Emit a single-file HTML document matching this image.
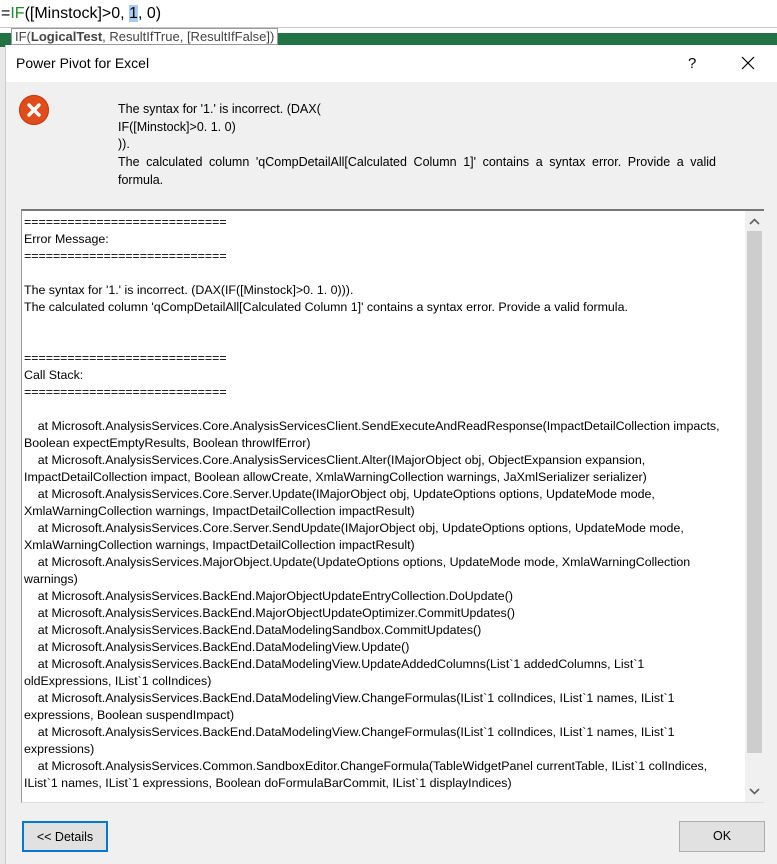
<!DOCTYPE html>
<html><head><meta charset="utf-8"><style>
*{margin:0;padding:0;box-sizing:border-box}
body{width:777px;height:864px;overflow:hidden;background:#fff;font-family:"Liberation Sans",sans-serif;position:relative}
.fbar{position:absolute;left:0;top:0;width:777px;height:28px;background:#fff;border-bottom:1px solid #c8c8c8;font-size:16px;line-height:28px;padding-left:1px}
.fbar .g{color:#1e8a2e}
.fbar .sel{background:#a6cdf0}
.hdr{position:absolute;left:0;top:33px;width:777px;height:14px;background:#217346}
.tip{position:absolute;left:11px;top:28px;height:17px;background:#fff;border:1px solid #999;font-size:13px;line-height:15px;padding:0 3px;color:#444}
.left{position:absolute;left:0;top:47px;width:5px;height:817px;background:#e8e8e8}
.dlg{position:absolute;left:5px;top:45px;width:772px;height:819px;background:#f0f0f0;border-left:1px solid #ccc}
.title{position:absolute;left:0;top:0;width:772px;height:37px;background:#fff;font-size:14px;line-height:37px;padding-left:10px;color:#000}
.q{position:absolute;left:682px;top:0;font-size:15px;line-height:37px}
.x{position:absolute;left:735px;top:11px}
.icon{position:absolute;left:13px;top:50px;width:30px;height:30px;border-radius:50%;background:#e04c1a;box-shadow:inset 0 0 0 1px #c63c10}
.msg{position:absolute;left:112px;top:56px;width:598px;font-size:12.5px;line-height:17.7px;text-align:justify;color:#000}
.box{position:absolute;left:15px;top:164px;width:743px;height:594px;background:#fff;border-top:2px solid #777;border-left:1px solid #999;border-bottom:1px solid #ddd}
.txt{position:absolute;left:2px;top:3px;font-size:12.4px;line-height:17px;white-space:pre;color:#000}
.sb{position:absolute;right:0;top:0;width:19px;height:100%;background:#f0f0f0}
.thumb{position:absolute;left:2px;top:20px;width:15px;height:522px;background:#cdcdcd}
.arr{position:absolute;left:4px}
.btn{position:absolute;height:31px;background:#e1e1e1;border:1px solid #adadad;font-size:12.5px;line-height:29px;text-align:center}
</style></head><body>
<div class="fbar">=<span class="g">IF</span>([Minstock]&gt;0, <span class="sel">1</span>, 0)</div>
<div class="hdr"></div>
<div class="tip">IF(<b>LogicalTest</b>, ResultIfTrue, [ResultIfFalse])</div>
<div class="left"></div>
<div class="dlg">
<div class="title">Power Pivot for Excel</div>
<div class="q">?</div>
<div class="x"><svg width="14" height="14"><path d="M1 1L13 13M13 1L1 13" stroke="#000" stroke-width="1.2"/></svg></div>
<div class="icon"><svg width="30" height="30"><path d="M10 10L20 20M20 10L10 20" stroke="#fff" stroke-width="3.4" stroke-linecap="round"/></svg></div>
<div class="msg">The syntax for '1.' is incorrect. (DAX(<br>IF([Minstock]&gt;0. 1. 0)<br>)).<br>The calculated column 'qCompDetailAll[Calculated Column 1]' contains a syntax error. Provide a valid formula.</div>
<div class="box">
<div class="txt">============================
Error Message:
============================

The syntax for '1.' is incorrect. (DAX(IF([Minstock]&gt;0. 1. 0))).
The calculated column 'qCompDetailAll[Calculated Column 1]' contains a syntax error. Provide a valid formula.


============================
Call Stack:
============================

    at Microsoft.AnalysisServices.Core.AnalysisServicesClient.SendExecuteAndReadResponse(ImpactDetailCollection impacts,
Boolean expectEmptyResults, Boolean throwIfError)
    at Microsoft.AnalysisServices.Core.AnalysisServicesClient.Alter(IMajorObject obj, ObjectExpansion expansion,
ImpactDetailCollection impact, Boolean allowCreate, XmlaWarningCollection warnings, JaXmlSerializer serializer)
    at Microsoft.AnalysisServices.Core.Server.Update(IMajorObject obj, UpdateOptions options, UpdateMode mode,
XmlaWarningCollection warnings, ImpactDetailCollection impactResult)
    at Microsoft.AnalysisServices.Core.Server.SendUpdate(IMajorObject obj, UpdateOptions options, UpdateMode mode,
XmlaWarningCollection warnings, ImpactDetailCollection impactResult)
    at Microsoft.AnalysisServices.MajorObject.Update(UpdateOptions options, UpdateMode mode, XmlaWarningCollection
warnings)
    at Microsoft.AnalysisServices.BackEnd.MajorObjectUpdateEntryCollection.DoUpdate()
    at Microsoft.AnalysisServices.BackEnd.MajorObjectUpdateOptimizer.CommitUpdates()
    at Microsoft.AnalysisServices.BackEnd.DataModelingSandbox.CommitUpdates()
    at Microsoft.AnalysisServices.BackEnd.DataModelingView.Update()
    at Microsoft.AnalysisServices.BackEnd.DataModelingView.UpdateAddedColumns(List`1 addedColumns, List`1
oldExpressions, IList`1 colIndices)
    at Microsoft.AnalysisServices.BackEnd.DataModelingView.ChangeFormulas(IList`1 colIndices, IList`1 names, IList`1
expressions, Boolean suspendImpact)
    at Microsoft.AnalysisServices.BackEnd.DataModelingView.ChangeFormulas(IList`1 colIndices, IList`1 names, IList`1
expressions)
    at Microsoft.AnalysisServices.Common.SandboxEditor.ChangeFormula(TableWidgetPanel currentTable, IList`1 colIndices,
IList`1 names, IList`1 expressions, Boolean doFormulaBarCommit, IList`1 displayIndices)</div>
<div class="sb">
<svg class="arr" style="top:7px" width="11" height="7"><path d="M1 6L5.5 1.5L10 6" stroke="#606060" stroke-width="1.6" fill="none"/></svg>
<div class="thumb"></div>
<svg class="arr" style="bottom:7px" width="11" height="7"><path d="M1 1L5.5 5.5L10 1" stroke="#606060" stroke-width="1.6" fill="none"/></svg>
</div>
</div>
<div class="btn" style="left:16px;top:776px;width:86px;border:2px solid #0078d7">&lt;&lt; Details</div>
<div class="btn" style="left:673px;top:776px;width:86px">OK</div>
</div>
</body></html>
